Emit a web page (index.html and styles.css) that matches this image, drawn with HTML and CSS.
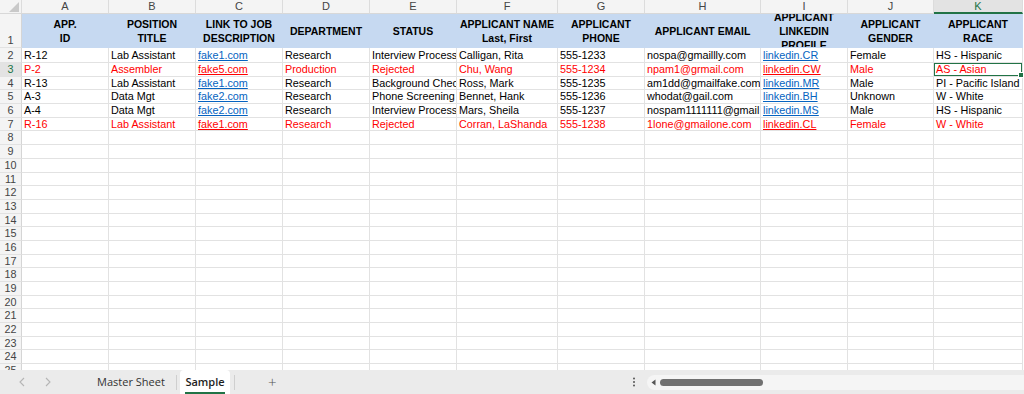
FILE: index.html
```html
<!DOCTYPE html>
<html lang="en">
<head>
    <meta charset="UTF-8">
    <meta name="viewport" content="width=device-width, initial-scale=1.0">
    <title>Sample - Applicants</title>
    <link rel="stylesheet" href="styles.css">
</head>
<body>
    <div class="sheet">
        <div class="row letters">
            <div class="corner">
                <svg width="12" height="12" viewBox="0 0 12 12"><polygon points="11,1 11,11 1,11" fill="#c9c9c9"/></svg>
            </div>
            <div>A</div><div>B</div><div>C</div><div>D</div><div>E</div><div>F</div>
            <div>G</div><div>H</div><div>I</div><div>J</div><div class="colsel">K</div>
        </div>

        <div class="row head">
            <div class="num">1</div>
            <div><span>APP.<br>ID</span></div>
            <div><span>POSITION<br>TITLE</span></div>
            <div><span>LINK TO JOB<br>DESCRIPTION</span></div>
            <div><span>DEPARTMENT</span></div>
            <div><span>STATUS</span></div>
            <div><span>APPLICANT NAME<br>Last, First</span></div>
            <div><span>APPLICANT<br>PHONE</span></div>
            <div><span>APPLICANT EMAIL</span></div>
            <div><span>APPLICANT<br>LINKEDIN<br>PROFILE</span></div>
            <div><span>APPLICANT<br>GENDER</span></div>
            <div><span>APPLICANT<br>RACE</span></div>
        </div>

        <div class="row first">
            <div class="num">2</div>
            <div>R-12</div><div>Lab Assistant</div><div><a href="#">fake1.com</a></div>
            <div>Research</div><div>Interview Process</div><div>Calligan, Rita</div>
            <div>555-1233</div><div>nospa@gmaillly.com</div><div><a href="#">linkedin.CR</a></div>
            <div>Female</div><div>HS - Hispanic</div>
        </div>
        <div class="row red">
            <div class="num rowsel">3</div>
            <div>P-2</div><div>Assembler</div><div><a href="#">fake5.com</a></div>
            <div>Production</div><div>Rejected</div><div>Chu, Wang</div>
            <div>555-1234</div><div>npam1@grmail.com</div><div><a href="#">linkedin.CW</a></div>
            <div>Male</div><div class="active">AS - Asian</div>
        </div>
        <div class="row">
            <div class="num">4</div>
            <div>R-13</div><div>Lab Assistant</div><div><a href="#">fake1.com</a></div>
            <div>Research</div><div>Background Check</div><div>Ross, Mark</div>
            <div>555-1235</div><div>am1dd@gmailfake.com</div><div><a href="#">linkedin.MR</a></div>
            <div>Male</div><div>PI - Pacific Island</div>
        </div>
        <div class="row">
            <div class="num">5</div>
            <div>A-3</div><div>Data Mgt</div><div><a href="#">fake2.com</a></div>
            <div>Research</div><div>Phone Screening</div><div>Bennet, Hank</div>
            <div>555-1236</div><div>whodat@gail.com</div><div><a href="#">linkedin.BH</a></div>
            <div>Unknown</div><div>W - White</div>
        </div>
        <div class="row">
            <div class="num">6</div>
            <div>A-4</div><div>Data Mgt</div><div><a href="#">fake2.com</a></div>
            <div>Research</div><div>Interview Process</div><div>Mars, Sheila</div>
            <div>555-1237</div><div>nospam1111111@gmail.com</div><div><a href="#">linkedin.MS</a></div>
            <div>Male</div><div>HS - Hispanic</div>
        </div>
        <div class="row red">
            <div class="num">7</div>
            <div>R-16</div><div>Lab Assistant</div><div><a href="#">fake1.com</a></div>
            <div>Research</div><div>Rejected</div><div>Corran, LaShanda</div>
            <div>555-1238</div><div>1lone@gmailone.com</div><div><a href="#">linkedin.CL</a></div>
            <div>Female</div><div>W - White</div>
        </div>

        <div class="row"><div class="num">8</div><i></i><i></i><i></i><i></i><i></i><i></i><i></i><i></i><i></i><i></i><i></i></div>
        <div class="row"><div class="num">9</div><i></i><i></i><i></i><i></i><i></i><i></i><i></i><i></i><i></i><i></i><i></i></div>
        <div class="row"><div class="num">10</div><i></i><i></i><i></i><i></i><i></i><i></i><i></i><i></i><i></i><i></i><i></i></div>
        <div class="row"><div class="num">11</div><i></i><i></i><i></i><i></i><i></i><i></i><i></i><i></i><i></i><i></i><i></i></div>
        <div class="row"><div class="num">12</div><i></i><i></i><i></i><i></i><i></i><i></i><i></i><i></i><i></i><i></i><i></i></div>
        <div class="row"><div class="num">13</div><i></i><i></i><i></i><i></i><i></i><i></i><i></i><i></i><i></i><i></i><i></i></div>
        <div class="row"><div class="num">14</div><i></i><i></i><i></i><i></i><i></i><i></i><i></i><i></i><i></i><i></i><i></i></div>
        <div class="row"><div class="num">15</div><i></i><i></i><i></i><i></i><i></i><i></i><i></i><i></i><i></i><i></i><i></i></div>
        <div class="row"><div class="num">16</div><i></i><i></i><i></i><i></i><i></i><i></i><i></i><i></i><i></i><i></i><i></i></div>
        <div class="row"><div class="num">17</div><i></i><i></i><i></i><i></i><i></i><i></i><i></i><i></i><i></i><i></i><i></i></div>
        <div class="row"><div class="num">18</div><i></i><i></i><i></i><i></i><i></i><i></i><i></i><i></i><i></i><i></i><i></i></div>
        <div class="row"><div class="num">19</div><i></i><i></i><i></i><i></i><i></i><i></i><i></i><i></i><i></i><i></i><i></i></div>
        <div class="row"><div class="num">20</div><i></i><i></i><i></i><i></i><i></i><i></i><i></i><i></i><i></i><i></i><i></i></div>
        <div class="row"><div class="num">21</div><i></i><i></i><i></i><i></i><i></i><i></i><i></i><i></i><i></i><i></i><i></i></div>
        <div class="row"><div class="num">22</div><i></i><i></i><i></i><i></i><i></i><i></i><i></i><i></i><i></i><i></i><i></i></div>
        <div class="row"><div class="num">23</div><i></i><i></i><i></i><i></i><i></i><i></i><i></i><i></i><i></i><i></i><i></i></div>
        <div class="row"><div class="num">24</div><i></i><i></i><i></i><i></i><i></i><i></i><i></i><i></i><i></i><i></i><i></i></div>
        <div class="row"><div class="num">25</div><i></i><i></i><i></i><i></i><i></i><i></i><i></i><i></i><i></i><i></i><i></i></div>
    </div>

    <div class="tabbar">
        <div class="nav">
            <svg width="6" height="10" viewBox="0 0 6 10"><polyline points="5,1 1,5 5,9" fill="none" stroke="#b5b5b5" stroke-width="1.1"/></svg>
            <svg width="6" height="10" viewBox="0 0 6 10"><polyline points="1,1 5,5 1,9" fill="none" stroke="#b5b5b5" stroke-width="1.1"/></svg>
        </div>
        <div class="tab">Master Sheet</div>
        <div class="sep"></div>
        <div class="tab current"><span>Sample</span></div>
        <div class="sep"></div>
        <div class="add">+</div>
        <div class="spacer"></div>
        <svg class="dots" width="4" height="10" viewBox="0 0 4 10"><circle cx="2" cy="1.5" r="1" fill="#555"/><circle cx="2" cy="5" r="1" fill="#555"/><circle cx="2" cy="8.5" r="1" fill="#555"/></svg>
        <div class="track">
            <svg width="5" height="7" viewBox="0 0 5 7"><polygon points="4.5,0.5 4.5,6.5 0.5,3.5" fill="#555"/></svg>
            <div class="thumb"></div>
        </div>
    </div>
</body>
</html>
```

FILE: styles.css
```css
body {
    margin: 0;
    width: 1024px;
    height: 394px;
    overflow: hidden;
    background-color: #fff;
    font-family: "Liberation Sans", Arial, sans-serif;
    color: #000;
}

.sheet {
    height: 370px;
    overflow: hidden;
}

.row {
    display: grid;
    grid-template-columns: 22px 87px 87px 87px 87px 87px 101px 87px 116px 87px 86px 89px;
    height: 13.7px;
}

.row > div,
.row > i {
    box-sizing: border-box;
    border-right: 1px solid #e2e2e2;
    border-bottom: 1px solid #e2e2e2;
    padding-left: 2px;
    overflow: hidden;
    white-space: nowrap;
    font-size: 10.8px;
    line-height: 12.7px;
}

.row.first {
    height: 15px;
}

.row.first > div {
    line-height: 14px;
}

.num {
    background-color: #f4f4f4;
    color: #444;
    text-align: center;
    padding-left: 0 !important;
    border-right-color: #d5d5d5 !important;
}

.rowsel {
    color: #217346;
    background-color: #e3e3e3;
}

.letters {
    height: 14px;
}

.letters > div {
    background-color: #f4f4f4;
    color: #444;
    text-align: center;
    padding-left: 0;
    font-size: 11px;
    line-height: 13px;
    border-right-color: #dcdcdc;
    border-bottom-color: #d8d8d8;
}

.letters .corner {
    display: flex;
    justify-content: flex-end;
    align-items: flex-end;
    padding-right: 1px;
}

.letters .colsel {
    color: #217346;
    background-color: #e3e3e3;
    border-bottom: 2px solid #217346;
}

.head {
    height: 34px;
}

.head > div {
    display: flex;
    align-items: center;
    justify-content: center;
    padding-left: 0;
    background-color: #c6d9f1;
    border-right-color: #c6d9f1;
    border-bottom-color: #c6d9f1;
    font-weight: bold;
    font-size: 10.5px;
    line-height: 14px;
    text-align: center;
    white-space: nowrap;
}

.head > .num {
    align-items: flex-end;
    background-color: #f4f4f4;
    border-bottom-color: #e2e2e2;
    font-weight: normal;
    font-size: 11px;
    line-height: 13px;
}

a {
    color: #0563c1;
    text-decoration: underline;
}

.red > div,
.red a {
    color: #ff0000;
}

.red > .num {
    color: #444;
}

.red > .rowsel {
    color: #217346;
}

.active {
    position: relative;
    box-shadow: inset 0 0 0 1px #217346;
    overflow: visible !important;
}

.active::after {
    content: "";
    position: absolute;
    right: -2px;
    bottom: -2px;
    width: 4px;
    height: 4px;
    background-color: #217346;
    border: 1px solid #fff;
}

/* sheet tabs + scrollbar */
.tabbar {
    display: flex;
    align-items: center;
    height: 24px;
    background-color: #ebebeb;
    font-family: "Open Sans", "Noto Sans", sans-serif;
    font-size: 11px;
    color: #333;
}

.nav {
    display: flex;
    align-items: center;
    gap: 20px;
    box-sizing: border-box;
    width: 90px;
    padding-left: 19px;
}

.tab {
    width: 82px;
    height: 24px;
    line-height: 24px;
    text-align: center;
}

.tab.current {
    width: 50px;
    margin-left: 3px;
    background-color: #fff;
    border-radius: 4px 4px 0 0;
    font-weight: 600;
    color: #1e1e1e;
}

.tab.current span {
    display: inline-block;
    line-height: 20px;
    border-bottom: 2px solid #217346;
}

.sep {
    width: 1px;
    height: 15px;
    margin-left: 4px;
    background-color: #cfcfcf;
}

.add {
    margin-left: 33px;
    font-size: 15px;
    color: #555;
    font-weight: 300;
}

.spacer {
    flex: 1;
}

.dots {
    margin-right: 11px;
}

.track {
    display: flex;
    align-items: center;
    gap: 4px;
    box-sizing: border-box;
    width: 377px;
    height: 15px;
    padding-left: 4px;
    background-color: #f5f5f5;
    border-radius: 8px 0 0 8px;
}

.thumb {
    width: 103px;
    height: 7px;
    border-radius: 4px;
    background-color: #707070;
}
```
